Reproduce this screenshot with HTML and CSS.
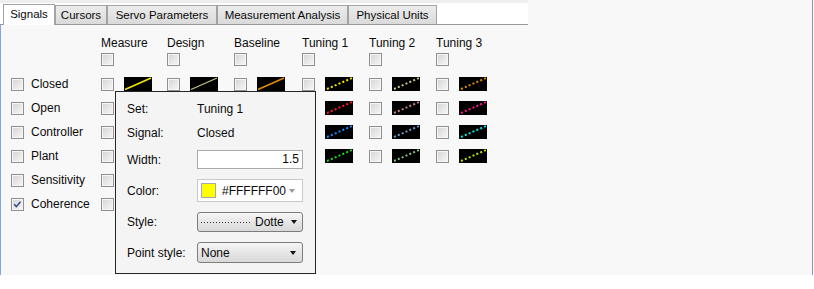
FILE: index.html
```html
<!DOCTYPE html>
<html>
<head>
<meta charset="utf-8">
<link rel="stylesheet" href="styles.css">
</head>
<body>
<div class="window">
  <div class="tabs">
    <div class="tabbar">
      <div class="tab active t-signals">Signals</div>
      <div class="tab t-cursors">Cursors</div>
      <div class="tab t-servo">Servo Parameters</div>
      <div class="tab t-meas">Measurement Analysis</div>
      <div class="tab t-phys">Physical Units</div>
    </div>
    <div class="panel">
      <div class="grid">
        <div class="head"></div>
        <div class="head"><span class="htext">Measure</span><span class="cb"></span></div>
        <div class="head"><span class="htext">Design</span><span class="cb"></span></div>
        <div class="head"><span class="htext">Baseline</span><span class="cb"></span></div>
        <div class="head"><span class="htext">Tuning 1</span><span class="cb"></span></div>
        <div class="head"><span class="htext">Tuning 2</span><span class="cb"></span></div>
        <div class="head"><span class="htext">Tuning 3</span><span class="cb"></span></div>

        <!-- Closed -->
        <div class="cell name"><span class="cb"></span><span>Closed</span></div>
        <div class="cell"><span class="cb"></span><svg class="sw" viewBox="0 0 28 14"><rect width="28" height="14"/><line class="solid k-yellow" x1="1" y1="12.5" x2="27" y2="1"/></svg></div>
        <div class="cell"><span class="cb"></span><svg class="sw" viewBox="0 0 28 14"><rect width="28" height="14"/><line class="thin k-khaki" x1="1" y1="12.5" x2="27" y2="1"/></svg></div>
        <div class="cell"><span class="cb"></span><svg class="sw" viewBox="0 0 28 14"><rect width="28" height="14"/><line class="solid k-orange" x1="1" y1="12.5" x2="27" y2="1"/></svg></div>
        <div class="cell"><span class="cb"></span><svg class="sw" viewBox="0 0 28 14"><rect width="28" height="14"/><line class="dot k-yellow" x1="2" y1="12" x2="27" y2="1"/></svg></div>
        <div class="cell"><span class="cb"></span><svg class="sw" viewBox="0 0 28 14"><rect width="28" height="14"/><line class="dot k-khaki" x1="2" y1="12" x2="27" y2="1"/></svg></div>
        <div class="cell"><span class="cb"></span><svg class="sw" viewBox="0 0 28 14"><rect width="28" height="14"/><line class="dot k-orange" x1="2" y1="12" x2="27" y2="1"/></svg></div>

        <!-- Open -->
        <div class="cell name"><span class="cb"></span><span>Open</span></div>
        <div class="cell"><span class="cb"></span><svg class="sw" viewBox="0 0 28 14"><rect width="28" height="14"/><line class="solid k-red" x1="1" y1="12.5" x2="27" y2="1"/></svg></div>
        <div class="cell"><span class="cb"></span><svg class="sw" viewBox="0 0 28 14"><rect width="28" height="14"/><line class="thin k-rose" x1="1" y1="12.5" x2="27" y2="1"/></svg></div>
        <div class="cell"><span class="cb"></span><svg class="sw" viewBox="0 0 28 14"><rect width="28" height="14"/><line class="solid k-magenta" x1="1" y1="12.5" x2="27" y2="1"/></svg></div>
        <div class="cell"><span class="cb"></span><svg class="sw" viewBox="0 0 28 14"><rect width="28" height="14"/><line class="dot k-red" x1="2" y1="12" x2="27" y2="1"/></svg></div>
        <div class="cell"><span class="cb"></span><svg class="sw" viewBox="0 0 28 14"><rect width="28" height="14"/><line class="dot k-rose" x1="2" y1="12" x2="27" y2="1"/></svg></div>
        <div class="cell"><span class="cb"></span><svg class="sw" viewBox="0 0 28 14"><rect width="28" height="14"/><line class="dot k-magenta" x1="2" y1="12" x2="27" y2="1"/></svg></div>

        <!-- Controller -->
        <div class="cell name"><span class="cb"></span><span>Controller</span></div>
        <div class="cell"><span class="cb"></span><svg class="sw" viewBox="0 0 28 14"><rect width="28" height="14"/><line class="solid k-blue" x1="1" y1="12.5" x2="27" y2="1"/></svg></div>
        <div class="cell"><span class="cb"></span><svg class="sw" viewBox="0 0 28 14"><rect width="28" height="14"/><line class="thin k-steel" x1="1" y1="12.5" x2="27" y2="1"/></svg></div>
        <div class="cell"><span class="cb"></span><svg class="sw" viewBox="0 0 28 14"><rect width="28" height="14"/><line class="solid k-cyan" x1="1" y1="12.5" x2="27" y2="1"/></svg></div>
        <div class="cell"><span class="cb"></span><svg class="sw" viewBox="0 0 28 14"><rect width="28" height="14"/><line class="dot k-blue" x1="2" y1="12" x2="27" y2="1"/></svg></div>
        <div class="cell"><span class="cb"></span><svg class="sw" viewBox="0 0 28 14"><rect width="28" height="14"/><line class="dot k-steel" x1="2" y1="12" x2="27" y2="1"/></svg></div>
        <div class="cell"><span class="cb"></span><svg class="sw" viewBox="0 0 28 14"><rect width="28" height="14"/><line class="dot k-cyan" x1="2" y1="12" x2="27" y2="1"/></svg></div>

        <!-- Plant -->
        <div class="cell name"><span class="cb"></span><span>Plant</span></div>
        <div class="cell"><span class="cb"></span><svg class="sw" viewBox="0 0 28 14"><rect width="28" height="14"/><line class="solid k-green" x1="1" y1="12.5" x2="27" y2="1"/></svg></div>
        <div class="cell"><span class="cb"></span><svg class="sw" viewBox="0 0 28 14"><rect width="28" height="14"/><line class="thin k-pale" x1="1" y1="12.5" x2="27" y2="1"/></svg></div>
        <div class="cell"><span class="cb"></span><svg class="sw" viewBox="0 0 28 14"><rect width="28" height="14"/><line class="solid k-lime" x1="1" y1="12.5" x2="27" y2="1"/></svg></div>
        <div class="cell"><span class="cb"></span><svg class="sw" viewBox="0 0 28 14"><rect width="28" height="14"/><line class="dot k-green" x1="2" y1="12" x2="27" y2="1"/></svg></div>
        <div class="cell"><span class="cb"></span><svg class="sw" viewBox="0 0 28 14"><rect width="28" height="14"/><line class="dot k-pale" x1="2" y1="12" x2="27" y2="1"/></svg></div>
        <div class="cell"><span class="cb"></span><svg class="sw" viewBox="0 0 28 14"><rect width="28" height="14"/><line class="dot k-lime" x1="2" y1="12" x2="27" y2="1"/></svg></div>

        <!-- Sensitivity -->
        <div class="cell name"><span class="cb"></span><span>Sensitivity</span></div>
        <div class="cell"><span class="cb"></span></div>
        <div class="cell"></div><div class="cell"></div><div class="cell"></div><div class="cell"></div><div class="cell"></div>

        <!-- Coherence -->
        <div class="cell name"><span class="cb checked"><svg viewBox="0 0 13 13"><path d="M2.6 6.2 L5.2 9 L10 3.2"/></svg></span><span>Coherence</span></div>
        <div class="cell"><span class="cb"></span></div>
        <div class="cell"></div><div class="cell"></div><div class="cell"></div><div class="cell"></div><div class="cell"></div>
      </div>
    </div>
  </div>

  <div class="popup">
    <div class="prow r-set"><span>Set:</span><span>Tuning 1</span></div>
    <div class="prow r-signal"><span>Signal:</span><span>Closed</span></div>
    <div class="prow r-width"><span>Width:</span><div class="input">1.5</div></div>
    <div class="prow r-color"><span>Color:</span><div class="colorbox"><span class="chip"></span><span class="ctext">#FFFFFF00</span><span class="arrow grey"></span></div></div>
    <div class="prow r-style"><span>Style:</span><div class="combo"><span class="dots"></span><span class="stext">Dotte</span><span class="arrow"></span></div></div>
    <div class="prow r-point"><span>Point style:</span><div class="combo"><span class="ptext">None</span><span class="arrow"></span></div></div>
  </div>
</div>
</body>
</html>
```

FILE: styles.css
```css
html, body {
  margin: 0;
  padding: 0;
  background: #ffffff;
}
body {
  font-family: "Liberation Sans", Arial, sans-serif;
  font-size: 12px;
  color: #0a0a0a;
}
.window {
  position: relative;
  width: 812px;
  height: 275px;
  background: #f8f8f8;
  border-right: 1px solid #8c96aa;
  display: flex;
  align-items: flex-start;
}
.tabs {
  flex: none;
  width: 528px;
  height: 279px;
  background: #f8f8f8;
  display: flex;
  flex-direction: column;
}
.tabbar {
  box-sizing: border-box;
  height: 25px;
  border-top: 3px solid #eeeeee;
  border-bottom: 1px solid #979797;
  background: #ffffff;
  display: flex;
  align-items: flex-end;
  padding-left: 3px;
}
.tab {
  box-sizing: border-box;
  flex: none;
  height: 19px;
  padding: 0;
  text-align: center;
  border: 1px solid #a3a3a3;
  border-bottom: none;
  background: linear-gradient(#ececec, #dadada);
  font-size: 11.5px;
  line-height: 18px;
  color: #0a0a0a;
  white-space: nowrap;
}
.tab.active {
  position: relative;
  height: 21px;
  margin-bottom: -1px;
  background: #ffffff;
  line-height: 19px;
  z-index: 1;
}
.t-signals { width: 52px; }
.t-cursors { width: 52px; }
.t-servo { width: 110px; }
.t-meas { width: 131px; }
.t-phys { width: 89px; }
.panel {
  flex: 1;
  border-left: 1px solid #86a8d6;
  padding: 11px 0 0 10px;
}
.grid {
  display: grid;
  grid-template-columns: 90px 66px 67px 68px 67px 67px 67px;
  row-gap: 10px;
}
.head {
  display: flex;
  flex-direction: column;
  align-items: flex-start;
  gap: 3px;
  padding-bottom: 1px;
}
.htext {
  line-height: 14px;
  height: 14px;
  white-space: nowrap;
}
.cell {
  display: flex;
  align-items: center;
  gap: 10px;
  height: 14px;
  white-space: nowrap;
}
.cell.name {
  gap: 7px;
}
.cb {
  box-sizing: border-box;
  flex: none;
  display: block;
  width: 13px;
  height: 13px;
  border: 1px solid #8f8f8f;
  background: linear-gradient(135deg, #d2d2d2 0%, #e8e8e8 55%, #f7f7f7 100%);
  box-shadow: inset 0 0 0 1px #f6f6f6;
}
.cb.checked svg {
  display: block;
  width: 11px;
  height: 11px;
}
.cb.checked path {
  fill: none;
  stroke: #33468c;
  stroke-width: 1.8;
}
.sw {
  display: block;
  flex: none;
  width: 28px;
  height: 14px;
}
.sw rect { fill: #000; }
.sw line { fill: none; }
.solid { stroke-width: 1.6; }
.thin { stroke-width: 1.1; }
.dot { stroke-width: 2; stroke-dasharray: 2 2.2; }
.k-yellow { stroke: #f2e800; }
.k-khaki { stroke: #c9c886; }
.k-orange { stroke: #e38a00; }
.k-red { stroke: #ff1c1c; }
.k-rose { stroke: #c98282; }
.k-magenta { stroke: #ff168e; }
.k-blue { stroke: #1b8cff; }
.k-steel { stroke: #6e9ccc; }
.k-cyan { stroke: #00e6ea; }
.k-green { stroke: #1edc1e; }
.k-pale { stroke: #7fbf7f; }
.k-lime { stroke: #b5e400; }

.popup {
  position: absolute;
  left: 115px;
  top: 91px;
  box-sizing: border-box;
  width: 201px;
  height: 183px;
  border: 1px solid #262626;
  background: #f4f4f4;
  padding: 7px 0 0 11px;
  z-index: 5;
}
.prow {
  display: grid;
  grid-template-columns: 70px 106px;
  align-items: center;
  white-space: nowrap;
}
.r-set { height: 20px; }
.r-signal { height: 20px; margin-top: 4px; }
.r-width { height: 19px; margin-top: 7px; }
.r-color { height: 23px; margin-top: 10px; }
.r-style { height: 20px; margin-top: 10px; }
.r-point { height: 21px; margin-top: 10px; }
.input {
  box-sizing: border-box;
  height: 19px;
  border: 1px solid #a9a9a9;
  background: #fff;
  text-align: right;
  padding-right: 3px;
  line-height: 17px;
}
.colorbox {
  box-sizing: border-box;
  height: 23px;
  border: 1px solid #c9c9c9;
  background: #fff;
  display: flex;
  align-items: center;
  padding-left: 3px;
}
.chip {
  box-sizing: border-box;
  width: 15px;
  height: 15px;
  background: #ffff00;
  border: 1px solid #a8a8a8;
  flex: none;
}
.ctext {
  margin-left: 6px;
  flex: 1;
}
.arrow {
  flex: none;
  width: 0;
  height: 0;
  border-left: 3.5px solid transparent;
  border-right: 3.5px solid transparent;
  border-top: 4px solid #111;
  margin-right: 6px;
}
.arrow.grey {
  border-top-color: #9a9a9a;
  margin-right: 7px;
}
.combo {
  box-sizing: border-box;
  height: 100%;
  border: 1px solid #7c7c7c;
  border-radius: 3px;
  background: linear-gradient(#f6f6f6, #e6e6e6 50%, #d9d9d9);
  display: flex;
  align-items: center;
  padding-left: 3px;
  overflow: hidden;
}
.dots {
  flex: none;
  width: 50px;
  height: 1px;
  background: repeating-linear-gradient(90deg, #333 0 1px, transparent 1px 3px);
}
.stext {
  flex: none;
  width: 33px;
  margin-left: 4px;
  margin-right: 3px;
  overflow: hidden;
  white-space: nowrap;
}
.ptext {
  flex: 1;
}
```
